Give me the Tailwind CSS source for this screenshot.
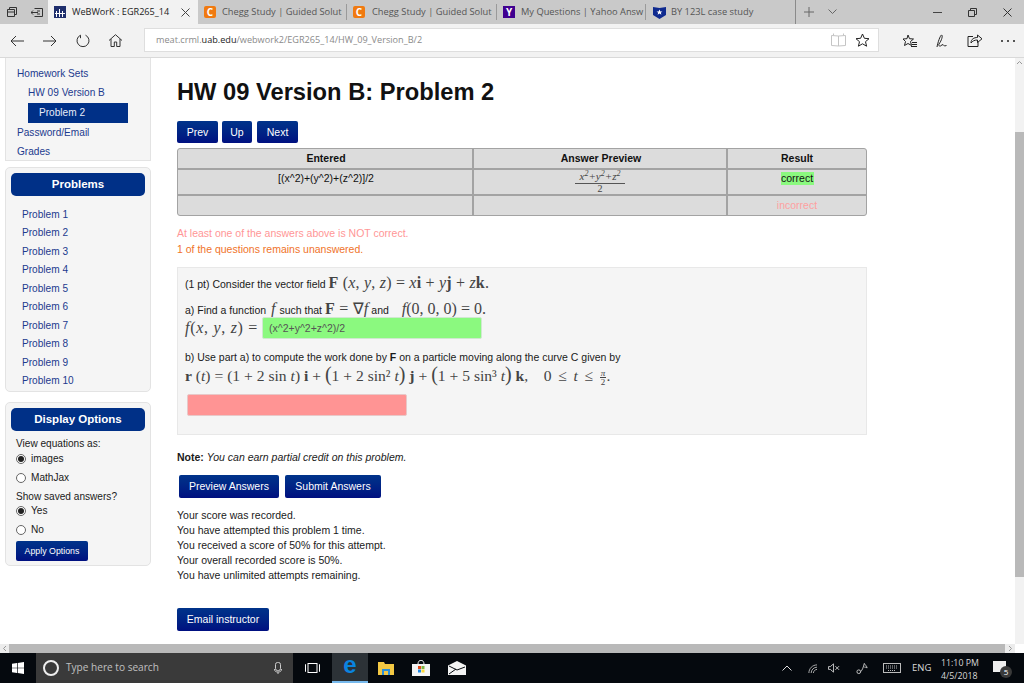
<!DOCTYPE html>
<html>
<head>
<meta charset="utf-8">
<script src="https://cdn.jsdelivr.net/npm/@tailwindcss/browser@4"></script>
</head>
<body class="m-0 overflow-hidden bg-white">
<div class="w-[1024px] h-[683px] flex flex-col overflow-hidden font-['Liberation_Sans',Arial,sans-serif] text-[#1a1a1a]">

  <!-- tabs -->
  <div class="h-6 flex items-center bg-[#c9c9c9] font-['Open_Sans',sans-serif] text-[9.3px] text-[#555] shrink-0">
    <div class="w-12 flex items-center gap-[14px] pl-[7px] h-full">
      <svg width="10" height="10" viewBox="0 0 10 10" fill="none" stroke="#333"><path d="M.5 2.500h7v7h-7zM2.500 2.500v-2h7v7h-2M.5 5h7"/></svg>
      <svg width="12" height="9" viewBox="0 0 12 9" fill="none" stroke="#333"><path d="M3.500.5h8v8h-8M0 4.500h7M2 2.500l-2 2 2 2M6 3h3M6 6h3"/></svg>
    </div>
    <div class="w-[150px] h-full bg-[#f2f2f2] flex items-center pl-[6px] pr-[8px] text-[#222] text-[9.15px]">
      <svg width="12" height="12" viewBox="0 0 12 12" class="shrink-0"><rect width="12" height="12" fill="#1f2f6d"/><path d="M2 11V5h1v6zM5 11V3h1v8zM8 11V5h1v6zM1 7h10v1H1z" fill="#fff"/></svg>
      <span class="ml-[6px] flex-1 whitespace-nowrap">WeBWorK : EGR265_14</span>
      <svg width="9" height="9" viewBox="0 0 9 9" stroke="#444" fill="none"><path d="M.5.500l8 8M8.500.500l-8 8"/></svg>
    </div>
    <div class="w-[149px] flex items-center pl-[6px] border-r border-[#9a9a9a] h-4">
      <span class="w-3 h-3 rounded-[2px] bg-[#f07a10] text-white text-[10px] font-bold leading-3 text-center shrink-0">C</span>
      <span class="ml-[6px] whitespace-nowrap">Chegg Study | Guided Solut</span>
    </div>
    <div class="w-[150px] flex items-center pl-[6px] border-r border-[#9a9a9a] h-4">
      <span class="w-3 h-3 rounded-[2px] bg-[#f07a10] text-white text-[10px] font-bold leading-3 text-center shrink-0">C</span>
      <span class="ml-[7px] whitespace-nowrap">Chegg Study | Guided Solut</span>
    </div>
    <div class="w-[149px] flex items-center pl-[6px] border-r border-[#9a9a9a] h-4">
      <span class="w-3 h-3 bg-[#400090] text-white text-[10px] font-bold leading-3 text-center shrink-0">Y</span>
      <span class="ml-[6px] whitespace-nowrap">My Questions | Yahoo Answ</span>
    </div>
    <div class="w-[150px] flex items-center pl-[7px] border-r border-[#8a8a8a] h-6">
      <svg width="13" height="13" viewBox="0 0 13 13" class="shrink-0"><path d="M0 1l6.500 1L13 1v8l-6.500 4L0 9z" fill="#0f2a8f"/><path d="M6.500 3.500l.9 2h2l-1.600 1.300.6 2-1.900-1.200-1.900 1.200.6-2L3.600 5.500h2z" fill="#fff"/></svg>
      <span class="ml-[5px] whitespace-nowrap">BY 123L case study</span>
    </div>
    <div class="flex items-center gap-[14px] pl-[8px]">
      <svg width="10" height="10" viewBox="0 0 10 10" stroke="#666" fill="none"><path d="M5 0v10M0 5h10"/></svg>
      <svg width="9" height="6" viewBox="0 0 9 6" stroke="#666" fill="none"><path d="M.5.500l4 4 4-4"/></svg>
    </div>
    <div class="ml-auto flex items-center gap-[26px] pr-[12px]">
      <svg width="9" height="9" viewBox="0 0 9 9" stroke="#444" fill="none"><path d="M0 4.500h9"/></svg>
      <svg width="9" height="9" viewBox="0 0 9 9" stroke="#333" fill="none"><path d="M.5 2.500h6v6h-6zM2.500 2.500v-2h6v6h-2"/></svg>
      <svg width="9" height="9" viewBox="0 0 9 9" stroke="#333" fill="none"><path d="M.5.500l8 8M8.500.500l-8 8"/></svg>
    </div>
  </div>

  <!-- toolbar -->
  <div class="h-[34px] flex items-center bg-[#f2f2f2] shrink-0 border-b border-[#d9d9d9]">
    <div class="w-[144px] flex items-center pl-[10px] gap-[19px]">
      <svg width="14" height="12" viewBox="0 0 14 12" stroke="#333" fill="none"><path d="M14 6H1M6 1L1 6l5 5"/></svg>
      <svg width="14" height="12" viewBox="0 0 14 12" stroke="#333" fill="none"><path d="M0 6h13M8 1l5 5-5 5"/></svg>
      <svg width="14" height="14" viewBox="0 0 14 14" stroke="#333" fill="none"><path d="M9.500 1.200A6 6 0 1 1 4.500 1.200M4.500 1.200v3"/></svg>
      <svg width="13" height="13" viewBox="0 0 13 13" stroke="#333" fill="none"><path d="M0 6.500L6.500 .7 13 6.500M2 5v7.500h3.300V8h2.400v4.500H11V5"/></svg>
    </div>
    <div class="w-[735px] h-[24px] -mt-px bg-white border border-[#dedede] flex items-center pl-[11px] pr-[8px] font-['Open_Sans',sans-serif] text-[9.15px] text-[#8a8a8a]">
      <span class="flex-1 whitespace-nowrap">meat.crml.<span class="text-[#222]">uab.edu</span>/webwork2/EGR265_14/HW_09_Version_B/2</span>
      <svg width="15" height="14" viewBox="0 0 15 14" stroke="#c4c4c4" fill="none" class="mr-[9px]"><path d="M.5 2.500l7 .5 7-.5v10l-7 .5-7-.5zM7.500 3v10M2.500 .5v2M12.500.5v2"/></svg>
      <svg width="15" height="14" viewBox="0 0 15 14" stroke="#222" fill="none"><path d="M7.500 1l1.900 4.300 4.600.4-3.500 3 1.100 4.500-4.100-2.400-4.100 2.400 1.100-4.500-3.500-3 4.600-.4z"/></svg>
    </div>
    <div class="flex items-center pl-[23px]">
      <svg width="15" height="14" viewBox="0 0 15 14" stroke="#222" fill="none"><path d="M6 1l1.500 3.700 4 .3-3 2.500 1 4-3.500-2-3.500 2 1-4-2.500-2.500 4-.3zM10 8.500h5M10 10.500h5M9 12.500h6"/></svg>
      <svg width="13" height="14" viewBox="0 0 13 14" stroke="#222" fill="none" class="ml-[19px]"><path d="M1 13C2 8 4 2 5.500 1 7 1 6 6 3 10c-1 1.500 1 3 2 1.500l2-1 1.500 1.500 2-.5"/></svg>
      <svg width="15" height="14" viewBox="0 0 15 14" stroke="#222" fill="none" class="ml-[18px]"><path d="M6 2.500H1v10h10V8M4 9c0-4 3-5.500 6.500-5.500V1L15 4.800l-4.500 3.700V6C7.500 6 5.500 7 4 9z"/></svg>
      <span class="flex gap-[4px] ml-[19px]"><i class="w-[2px] h-[2px] bg-[#555]"></i><i class="w-[2px] h-[2px] bg-[#555]"></i><i class="w-[2px] h-[2px] bg-[#555]"></i></span>
    </div>
  </div>

  <!-- viewport -->
  <div class="flex-1 flex min-h-0">
    <div class="flex-1 flex overflow-hidden text-[10.5px]">
      <!-- sidebar -->
      <div class="w-[177px] shrink-0 pl-[5px] text-[10.1px]">
        <div class="w-[146px] h-[103px] bg-[#f5f5f5] border border-t-0 border-[#e3e3e3] text-[#1c3a8e] pl-[11px] pt-[6px] leading-[19.4px]">
          <div>Homework Sets</div>
          <div class="pl-[11px]">HW 09 Version B</div>
          <div class="ml-[11px] w-[100px] h-[20px] bg-[#003087] text-[#e8ecf8] pl-[11px]">Problem 2</div>
          <div>Password/Email</div>
          <div>Grades</div>
        </div>
        <div class="w-[146px] h-[225px] mt-[6px] bg-[#f5f5f5] border border-[#e3e3e3] rounded-[5px] px-[5px] pt-[5px]">
          <div class="h-[23px] bg-[#003087] rounded-[5px] text-white font-bold text-[11.5px] text-center leading-[23px]">Problems</div>
          <div class="pl-[11px] pt-[10px] text-[#1c3a8e] leading-[18.44px]">
            <div>Problem 1</div><div>Problem 2</div><div>Problem 3</div><div>Problem 4</div><div>Problem 5</div><div>Problem 6</div><div>Problem 7</div><div>Problem 8</div><div>Problem 9</div><div>Problem 10</div>
          </div>
        </div>
        <div class="w-[146px] h-[164px] mt-[10px] bg-[#f5f5f5] border border-[#e3e3e3] rounded-[5px] px-[5px] pt-[5px]">
          <div class="h-[23px] bg-[#003087] rounded-[5px] text-white font-bold text-[11.5px] text-center leading-[23px]">Display Options</div>
          <div class="pl-[5px] pt-[5px] leading-[15px]">
            <div>View equations as:</div>
            <div class="flex items-center h-[15px] gap-[5px]"><span class="w-[10px] h-[10px] rounded-full border border-[#666] bg-white flex items-center justify-center"><i class="w-[6px] h-[6px] rounded-full bg-[#222]"></i></span>images</div>
            <div class="flex items-center h-[15px] mt-[4px] gap-[5px]"><span class="w-[10px] h-[10px] rounded-full border border-[#666] bg-white"></span>MathJax</div>
            <div class="mt-[4px]">Show saved answers?</div>
            <div class="flex items-center h-[15px] -mt-px gap-[5px]"><span class="w-[10px] h-[10px] rounded-full border border-[#666] bg-white flex items-center justify-center"><i class="w-[6px] h-[6px] rounded-full bg-[#222]"></i></span>Yes</div>
            <div class="flex items-center h-[15px] mt-[4px] gap-[5px]"><span class="w-[10px] h-[10px] rounded-full border border-[#666] bg-white"></span>No</div>
            <div class="w-[72px] h-[20px] mt-[4px] rounded-[2px] bg-gradient-to-b from-[#00338a] to-[#000f80] text-white text-[8.8px] text-center leading-[20px]">Apply Options</div>
          </div>
        </div>
      </div>

      <!-- main -->
      <div class="w-[690px] shrink-0">
        <h1 class="mt-[20px] h-[28px] font-bold text-[23.7px] leading-[28px] text-[#111] whitespace-nowrap">HW 09 Version B: Problem 2</h1>
        <div class="flex mt-[15px] gap-[4px] text-white">
          <div class="w-[41px] h-[22px] rounded-[2px] bg-gradient-to-b from-[#00338a] to-[#000f80] text-center leading-[22px]">Prev</div>
          <div class="w-[30px] h-[22px] rounded-[2px] bg-gradient-to-b from-[#00338a] to-[#000f80] text-center leading-[22px]">Up</div>
          <div class="w-[41px] h-[22px] ml-px rounded-[2px] bg-gradient-to-b from-[#00338a] to-[#000f80] text-center leading-[22px]">Next</div>
        </div>
        <!-- table -->
        <div class="mt-[5px] h-[68px] border border-[#a3a3a3] rounded-[3px] bg-[#dcdcdc] grid grid-cols-[296px_254px_1fr] grid-rows-[21px_26px_1fr] text-center text-[#111]">
          <div class="border-b-2 border-r-2 border-[#a3a3a3] pl-[2px] font-bold leading-[19px]">Entered</div>
          <div class="border-b-2 border-r-2 border-[#a3a3a3] pl-[2px] font-bold leading-[19px]">Answer Preview</div>
          <div class="border-b-2 border-[#a3a3a3] font-bold leading-[19px]">Result</div>
          <div class="border-b-2 border-r-2 border-[#a3a3a3] pl-[2px] leading-[17px]">[(x^2)+(y^2)+(z^2)]/2</div>
          <div class="border-b-2 border-r-2 border-[#a3a3a3] flex flex-col items-center font-['Liberation_Serif',serif] italic text-[11px] text-[#444] leading-[13px]"><span class="border-b border-[#555] w-[50px] whitespace-nowrap">x<sup class="text-[8px]">2</sup>+y<sup class="text-[8px]">2</sup>+z<sup class="text-[8px]">2</sup></span><span class="not-italic text-[10px] leading-[10px]">2</span></div>
          <div class="border-b-2 border-[#a3a3a3] pt-[2px]"><span class="block w-[33px] mx-auto bg-[#8bf97f] h-[13px] leading-[13px]">correct</span></div>
          <div class="border-r-2 border-[#a3a3a3]"></div>
          <div class="border-r-2 border-[#a3a3a3]"></div>
          <div class="text-[#ffa0a0] leading-[18px]">incorrect</div>
        </div>
        <div class="mt-[10px] text-[#ff9696] leading-[15px]">At least one of the answers above is NOT correct.</div>
        <div class="text-[#f0732a] leading-[16px]">1 of the questions remains unanswered.</div>
        <!-- problem -->
        <div class="mt-[10px] h-[168px] bg-[#f5f5f5] border border-[#e8e8e8] pl-[7px] pt-[5px]">
          <div class="h-[20px] leading-[20px] whitespace-nowrap">(1 pt) Consider the vector field <span class="font-['Liberation_Serif',serif] text-[16px] text-[#444] tracking-[0.2px]"><b>F</b> (<i>x</i>, <i>y</i>, <i>z</i>) = <i>x</i><b>i</b> + <i>y</i><b>j</b> + <i>z</i><b>k</b>.</span></div>
          <div class="h-[18px] mt-[7px] leading-[18px] whitespace-nowrap">a) Find a function <span class="font-['Liberation_Serif',serif] text-[16px] text-[#444] ml-[2px] mr-[1px]"><i>f</i></span> such that <span class="font-['Liberation_Serif',serif] text-[16px] text-[#444] tracking-[0.2px]"><b>F</b> = ∇<i>f</i></span> and <span class="font-['Liberation_Serif',serif] text-[16px] text-[#444] ml-[10px]"><i>f</i>(0, 0, 0) = 0.</span></div>
          <div class="flex items-center h-[22px] -mt-px">
            <span class="font-['Liberation_Serif',serif] text-[16px] text-[#444] w-[77px] whitespace-nowrap tracking-[0.7px]"><i>f</i>(<i>x</i>, <i>y</i>, <i>z</i>) =</span>
            <div class="w-[220px] h-[22px] bg-[#8bf97f] border border-[#d0e8d0] rounded-[2px] pl-[6px] text-[10.5px] leading-[20px] text-[#555]">(x^2+y^2+z^2)/2</div>
          </div>
          <div class="mt-[8px] h-[20px] leading-[20px] whitespace-nowrap">b) Use part a) to compute the work done by <b>F</b> on a particle moving along the curve C given by</div>
          <div class="h-[14px] leading-[14px] whitespace-nowrap font-['Liberation_Serif',serif] text-[15.6px] text-[#444]"><b>r</b> (<i>t</i>) = (1 + 2 sin <i>t</i>) <b>i</b> + <span class="text-[20px] font-light">(</span>1 + 2 sin² <i>t</i><span class="text-[20px] font-light">)</span> <b>j</b> + <span class="text-[20px] font-light">(</span>1 + 5 sin³ <i>t</i><span class="text-[20px] font-light">)</span> <b>k</b>, &nbsp;&nbsp;&nbsp;<span class="tracking-[1.4px]">0 ≤ <i>t</i> ≤ </span><span class="inline-flex flex-col items-center align-middle text-[9px] leading-[8px]"><span class="border-b border-[#444] px-px"><i>π</i></span><span>2</span></span>.</div>
          <div class="mt-[13px] ml-[2px] w-[220px] h-[22px] bg-[#ff9494] border border-[#e8c8c8] rounded-[2px]"></div>
        </div>
        <div class="mt-[15px] leading-[15px]"><b>Note:</b> <i>You can earn partial credit on this problem.</i></div>
        <div class="flex mt-[10px] ml-[3px] gap-[5px] text-white">
          <div class="w-[100px] h-[23px] -ml-px rounded-[2px] bg-gradient-to-b from-[#00338a] to-[#000f80] text-center leading-[23px]">Preview Answers</div>
          <div class="w-[96px] h-[23px] ml-px rounded-[2px] bg-gradient-to-b from-[#00338a] to-[#000f80] text-center leading-[23px]">Submit Answers</div>
        </div>
        <div class="mt-[10px] leading-[15px]">
          <div>Your score was recorded.</div>
          <div>You have attempted this problem 1 time.</div>
          <div>You received a score of 50% for this attempt.</div>
          <div>Your overall recorded score is 50%.</div>
          <div>You have unlimited attempts remaining.</div>
        </div>
        <div class="mt-[25px] w-[92px] h-[23px] rounded-[2px] bg-gradient-to-b from-[#00338a] to-[#000f80] text-white text-center leading-[23px]">Email instructor</div>
      </div>
    </div>
    <!-- vertical scrollbar -->
    <div class="w-[9px] bg-[#f2f2f2] flex flex-col shrink-0">
      <div class="h-[74px] flex justify-center pt-[3px]">
        <svg width="5" height="3" viewBox="0 0 5 3" stroke="#999" fill="none"><path d="M0 3l2.500-2.500L5 3"/></svg>
      </div>
      <div class="h-[445px] bg-[#b9b9b9]"></div>
    </div>
  </div>

  <!-- horizontal scrollbar -->
  <div class="h-[9px] bg-[#b9b9b9] shrink-0 flex justify-between items-stretch">
    <div class="w-[9px] bg-[#ececec] flex items-center justify-center">
      <svg width="3" height="5" viewBox="0 0 3 5" stroke="#999" fill="none"><path d="M3 0L.5 2.500 3 5"/></svg>
    </div>
    <div class="flex">
      <div class="w-[10px] bg-[#ececec] flex items-center justify-center">
        <svg width="3" height="5" viewBox="0 0 3 5" stroke="#999" fill="none"><path d="M0 0l2.500 2.500L0 5"/></svg>
      </div>
      <div class="w-[9px] bg-white"></div>
    </div>
  </div>

  <!-- taskbar -->
  <div class="h-[30px] bg-[#05090e] flex items-center shrink-0 text-[#d8d8d8] font-['Open_Sans',sans-serif]">
    <div class="w-9 flex justify-center">
      <svg width="12" height="12" viewBox="0 0 12 12" fill="#fff"><path d="M0 1.700l5-.7v4.700H0zM5.700.9L12 0v5.700H5.700zM0 6.300h5V11l-5-.7zM5.700 6.300H12V12l-6.300-.9z"/></svg>
    </div>
    <div class="w-[257px] h-full bg-[#3a3a3a] flex items-center pl-[7px] text-[10.1px] text-[#c0c0c0]">
      <span class="w-[16px] h-[16px] rounded-full border-[2px] border-[#eee]"></span>
      <span class="ml-[7px] flex-1">Type here to search</span>
      <svg width="8" height="12" viewBox="0 0 8 12" fill="none" stroke="#ccc" class="mr-[11px]"><rect x="1.500" y=".5" width="5" height="8" rx="2"/><path d="M.5 7c0 2 1 3 3.500 3s3.500-1 3.500-3M4 10v2"/></svg>
    </div>
    <div class="w-[39px] flex justify-center">
      <svg width="15" height="10" viewBox="0 0 15 10" fill="none" stroke="#fff"><rect x="3" y=".5" width="9" height="9"/><path d="M1 1.500H.5v7H1M14 1.500h.5v7H14"/></svg>
    </div>
    <div class="w-[36px] h-full bg-[#2c3237] border-b-2 border-[#76b9ed] flex items-center justify-center">
      <span class="text-[#0a84e0] font-bold text-[24px] leading-none font-['Liberation_Sans',sans-serif] -mt-[4px]">e</span>
    </div>
    <div class="w-[36px] flex justify-center">
      <svg width="16" height="13" viewBox="0 0 16 13"><path d="M0 0h6l1 2h9v11H0z" fill="#f3c843"/><path d="M4 7h8v6h-2V9H6v4H4z" fill="#2a8fd8"/></svg>
    </div>
    <div class="w-[34px] flex justify-center">
      <svg width="18" height="16" viewBox="0 0 18 16"><path d="M0 4h18v12H0z" fill="#f4f4f4"/><path d="M6 4c0-5 6-5 6 0" stroke="#f4f4f4" fill="none"/><path d="M6 6h3v3H6z" fill="#e64a19"/><path d="M9.500 6h3v3h-3z" fill="#7cb342"/><path d="M6 9.500h3v3H6z" fill="#1e88e5"/><path d="M9.500 9.500h3v3h-3z" fill="#fdd835"/></svg>
    </div>
    <div class="w-[38px] flex justify-center">
      <svg width="18" height="14" viewBox="0 0 18 14"><path d="M0 4.500L9 0l9 4.500V14H0z" fill="#f4f4f4"/><path d="M1 5l8 4 8-3M1 13l7-5" stroke="#05090e" fill="none"/></svg>
    </div>

    <div class="ml-auto flex items-center h-full">
      <svg width="10" height="6" viewBox="0 0 10 6" stroke="#ddd" fill="none" class="mr-[16px]"><path d="M.5 5.500L5 1l4.500 4.500"/></svg>
      <svg width="9" height="9" viewBox="0 0 10 10" stroke="#bbb" fill="none" class="mr-[11px]"><path d="M1 10c0-5 4-9 9-9M3.500 10c0-3.500 3-6.500 6.500-6.500M6 10c0-2 2-4 4-4"/></svg>
      <svg width="12" height="10" viewBox="0 0 13 10" stroke="#ccc" fill="none" class="mr-[16px]"><path d="M.5 3.500h2L6 .5v9l-3.500-3h-2zM8 3l4 4M12 3L8 7"/></svg>
      <svg width="12" height="13" viewBox="0 0 13 13" stroke="#ccc" fill="none" class="mr-[15px]"><circle cx="3" cy="10" r="2"/><path d="M5 10c2-2 3-5 4-9 1 2 3 3 3 5-1-1-2-1-3-1"/></svg>
      <svg width="18" height="10" viewBox="0 0 18 10" stroke="#bbb" fill="none" class="mr-[11px]"><rect x=".5" y=".5" width="17" height="9"/><path d="M3 3h12M3 5h12M5 7.500h8" stroke-dasharray="1 1"/></svg>
      <span class="text-[9.5px] w-[29px]">ENG</span>
      <div class="text-[8.8px] leading-[13px] whitespace-nowrap w-[52px] mt-[3px]"><div>11:10 PM</div><div>4/5/2018</div></div>
      <div class="w-[31px]">
        <div class="relative w-[13px] h-[11px] bg-[#eee] -mt-[3px]">
          <span class="absolute -right-[6px] -bottom-[6px] w-[12px] h-[12px] rounded-full bg-[#3a3a3a] text-white text-[8px] leading-[12px] text-center">5</span>
        </div>
      </div>
    </div>
  </div>
</div>
</body>
</html>
